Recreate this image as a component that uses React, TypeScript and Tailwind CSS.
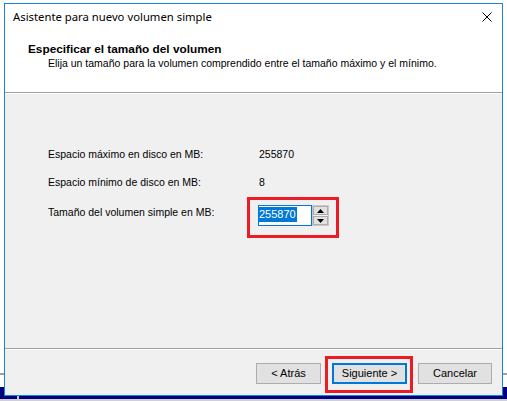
import React from "react";

const ui = { fontFamily: '"Liberation Sans", Arial, sans-serif' };
const title = { fontFamily: '"Noto Sans", "Liberation Sans", sans-serif' };

function Btn({ children, primary }: { children: React.ReactNode; primary?: boolean }) {
  return (
    <div
      className={
        "flex h-[21px] items-center justify-center bg-[#e1e1e1] text-[11px] leading-[13px] text-black " +
        (primary ? "w-[75px] border-2 border-[#0078d7]" : "w-[74px] border border-[#adadad]")
      }
    >
      {children}
    </div>
  );
}

export default function App() {
  return (
    <div className="relative h-[401px] w-[507px] overflow-hidden bg-white" style={ui}>
      {/* background app behind the dialog */}
      <div className="absolute left-0 top-[373px] h-[2px] w-[507px] bg-[#a0a0a0]" />
      <div className="absolute left-0 top-[387px] h-[12px] w-[507px] bg-[#000080]" />
      <div className="absolute left-[17px] top-[396px] h-[3px] w-[2px] bg-[#c8c8c8]" />
      <div className="absolute left-0 top-[399px] h-[2px] w-[507px] bg-[#d0d0d0]" />

      {/* dialog window */}
      <div className="relative ml-[4px] mt-[3px] flex h-[393px] w-[499px] flex-col border border-[#1883d7] bg-[#f0f0f0]">
        <div className="flex h-[88px] flex-col bg-white">
          <div className="flex h-[26px] items-center justify-between pl-[8px] pr-[10px]">
            <span className="text-[11.3px] leading-[16px] text-black" style={title}>
              Asistente para nuevo volumen simple
            </span>
            <svg width="10" height="10" viewBox="0 0 10 10">
              <path d="M0.5 0.5 L9.5 9.5 M9.5 0.5 L0.5 9.5" stroke="#000" strokeWidth="1" fill="none" />
            </svg>
          </div>
          <div className="mt-[13px] pl-[23px] text-[11.8px] font-bold leading-[13px] text-black">
            Especificar el tamaño del volumen
          </div>
          <div className="mt-[1px] pl-[43px] text-[10.5px] leading-[13px] text-black">
            Elija un tamaño para la volumen comprendido entre el tamaño máximo y el mínimo.
          </div>
        </div>
        <div className="h-[1px] bg-[#a0a0a0]" />
        <div className="h-[1px] bg-white" />

        <div className="flex flex-1 flex-col pl-[43px] pt-[54px] text-[10.5px] leading-[13px] text-black">
          <div className="flex">
            <span className="w-[210px]">Espacio máximo en disco en MB:</span>
            <span className="pl-[1px]">255870</span>
          </div>
          <div className="mt-[15px] flex">
            <span className="w-[210px]">Espacio mínimo de disco en MB:</span>
            <span className="pl-[1px]">8</span>
          </div>
          <div className="mt-[16px] flex items-start">
            <span className="w-[210px] pt-[1px]">Tamaño del volumen simple en MB:</span>
            <div className="flex h-[21px]">
              <div className="w-[54px] border border-[#0078d7] bg-white pt-[1px]">
                <span className="inline-block bg-[#0078d7] py-[1px] pr-[1px] text-[11px] leading-[13px] text-white">255870</span>
              </div>
              <div className="flex w-[17px] flex-col gap-[1px] border border-[#c8c8c8] bg-[#f0f0f0]">
                <div className="flex flex-1 items-center justify-center border border-[#adadad] bg-[#e1e1e1]">
                  <svg width="7" height="4" viewBox="0 0 7 4"><path d="M3.5 0 L7 4 L0 4 Z" fill="#000" /></svg>
                </div>
                <div className="flex flex-1 items-center justify-center border border-[#adadad] bg-[#e1e1e1]">
                  <svg width="7" height="4" viewBox="0 0 7 4"><path d="M0 0 L7 0 L3.5 4 Z" fill="#000" /></svg>
                </div>
              </div>
            </div>
          </div>
        </div>

        <div className="h-[1px] bg-[#a0a0a0]" />
        <div className="h-[1px] bg-white" />
        <div className="flex h-[45px] items-start justify-end gap-[11px] pr-[10px] pt-[13px]">
          <div className="flex h-[21px] w-[65px] items-center justify-center border border-[#adadad] bg-[#e1e1e1] text-[11px] leading-[13px]">
            &lt; Atrás
          </div>
          <Btn primary>Siguiente &gt;</Btn>
          <Btn>Cancelar</Btn>
        </div>

        {/* annotation boxes */}
        <div className="absolute left-[242px] top-[193px] h-[41px] w-[92px] border-[3px] border-[#ed1c24]" />
        <div className="absolute left-[320px] top-[352px] h-[37px] w-[88px] border-[3px] border-[#ed1c24]" />
      </div>
    </div>
  );
}
